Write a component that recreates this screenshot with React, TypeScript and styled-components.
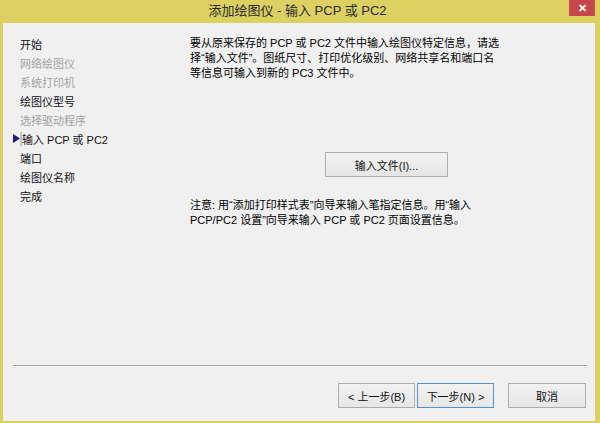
import React from 'react'
import styled, { createGlobalStyle } from 'styled-components'

const GlobalStyle = createGlobalStyle`
  html, body {
    margin: 0;
    padding: 0;
    background: #ddd063;
  }
  body {
    font-family: "Liberation Sans", "Noto Sans CJK SC", sans-serif;
    font-size: 11px;
    color: #000;
  }
`

const Frame = styled.div`
  width: 600px;
  height: 423px;
  display: flex;
  flex-direction: column;
  background: #ddd063;
  box-sizing: border-box;
  padding: 0 5px 2px 3px;
`

const TitleBar = styled.div`
  height: 23px;
  display: grid;
  grid-template-columns: 1fr auto 1fr;
  align-items: start;
  margin: 0 -5px 0 -3px;
  padding-right: 5px;
`

const Title = styled.div`
  grid-column: 2;
  font-size: 13px;
  line-height: 22px;
  color: #2b2b2b;
  white-space: nowrap;
`

const CloseButton = styled.div`
  grid-column: 3;
  justify-self: end;
  width: 26px;
  height: 16px;
  background: #c7484b;
  color: #fff;
  display: flex;
  align-items: center;
  justify-content: center;
  font-family: "Liberation Sans", sans-serif;
  font-size: 11px;
  font-weight: bold;
`

const Body = styled.div`
  flex: 1;
  background: #f0f0f0;
  display: flex;
  flex-direction: column;
`

const Top = styled.div`
  height: 342px;
  display: flex;
`

const Steps = styled.ul`
  list-style: none;
  margin: 0;
  padding: 11px 0 0 10px;
  width: 187px;
  box-sizing: border-box;
`

const Step = styled.li<{ $disabled?: boolean }>`
  display: flex;
  align-items: center;
  height: 19px;
  color: ${p => (p.$disabled ? '#a3a3a3' : '#111')};
  white-space: nowrap;
`

const Marker = styled.span`
  width: 7px;
  flex: none;
  display: flex;
  align-items: center;
`

const Caret = styled.span`
  width: 2px;
  height: 14px;
  background: #c4c4c4;
  flex: none;
`

const Main = styled.div`
  flex: 1;
  padding: 13px 12px 0 0;
  display: flex;
  flex-direction: column;
`

const Para = styled.p`
  margin: 0;
  line-height: 15px;
  white-space: nowrap;
`

const FileButtonRow = styled.div`
  display: flex;
  justify-content: center;
  margin-top: 71px;
`

const Button = styled.button<{ $default?: boolean; $width?: number }>`
  font-family: "Liberation Sans", "Noto Sans CJK SC", sans-serif;
  font-size: 11px;
  color: #111;
  width: ${p => p.$width ?? 77}px;
  height: 25px;
  padding: 0;
  border: 1px solid ${p => (p.$default ? '#4f93c9' : '#adadad')};
  background: linear-gradient(#f2f2f2, #e6e6e6);
  box-sizing: border-box;
`

const Note = styled(Para)`
  margin-top: 21px;
`

const Separator = styled.div`
  margin: 0 8px 0 10px;
  height: 0;
  border-top: 1px solid #a7a7a7;
  border-bottom: 1px solid #fdfdfd;
`

const ButtonRow = styled.div`
  display: flex;
  justify-content: flex-end;
  gap: 2px;
  padding: 16px 9px 0 0;
`

const Spacer = styled.div`
  width: 10px;
`

const steps = [
  { label: '开始' },
  { label: '网络绘图仪', disabled: true },
  { label: '系统打印机', disabled: true },
  { label: '绘图仪型号' },
  { label: '选择驱动程序', disabled: true },
  { label: '输入 PCP 或 PC2', current: true },
  { label: '端口' },
  { label: '绘图仪名称' },
  { label: '完成' },
]

// small navy pointer in front of the current wizard step
const Pointer = () => (
  <svg width="7" height="9" viewBox="0 0 7 9">
    <path d="M0 0 L7 4.5 L0 9 Z" fill="#1c1c80" />
  </svg>
)

export default function App() {
  return (
    <>
      <GlobalStyle />
      <Frame>
        <TitleBar>
          <Title>添加绘图仪 - 输入 PCP 或 PC2</Title>
          <CloseButton>✕</CloseButton>
        </TitleBar>
        <Body>
          <Top>
            <Steps>
              {steps.map(s => (
                <Step key={s.label} $disabled={s.disabled}>
                  <Marker>{s.current && <Pointer />}</Marker>
                  {s.current && <Caret />}
                  {s.label}
                </Step>
              ))}
            </Steps>
            <Main>
              <Para>
                要从原来保存的 PCP 或 PC2 文件中输入绘图仪特定信息，请选
                <br />
                择“输入文件”。图纸尺寸、打印优化级别、网络共享名和端口名
                <br />
                等信息可输入到新的 PC3 文件中。
              </Para>
              <FileButtonRow>
                <Button $width={123}>输入文件(I)...</Button>
              </FileButtonRow>
              <Note>
                注意: 用“添加打印样式表”向导来输入笔指定信息。用“输入
                <br />
                PCP/PC2 设置”向导来输入 PCP 或 PC2 页面设置信息。
              </Note>
            </Main>
          </Top>
          <Separator />
          <ButtonRow>
            <Button>&lt; 上一步(B)</Button>
            <Button $default>下一步(N) &gt;</Button>
            <Spacer />
            <Button $width={78}>取消</Button>
          </ButtonRow>
        </Body>
      </Frame>
    </>
  )
}
